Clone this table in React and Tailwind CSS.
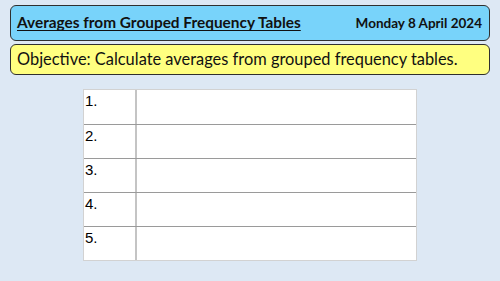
const rows = ['1.', '2.', '3.', '4.', '5.']

export default function App() {
  return (
    <div className="w-[500px] h-[281px] bg-[#dde8f4] flex flex-col px-[10px] pt-[5px] font-['Lato',sans-serif] text-[#111]">
      <div className="h-[36px] rounded-[6px] border-[1.5px] border-[#2f2f2f] bg-[#78d3fa] flex items-center justify-between px-[6px]">
        <span className="text-[15.4px] font-bold underline underline-offset-[2px]">Averages from Grouped Frequency Tables</span>
        <span className="text-[13.5px] font-bold mr-[1px]">Monday 8 April 2024</span>
      </div>
      <div className="mt-[3px] h-[31px] rounded-[6px] border-[1.5px] border-[#2f2f2f] bg-[#ffff80] flex items-center px-[6px]">
        <span className="text-[16.4px]">Objective: Calculate averages from grouped frequency tables.</span>
      </div>
      <div className="mt-[14px] ml-[73px] w-[334px] bg-white border border-[#d2d2d2] font-['Liberation_Sans',Arial,sans-serif] text-black">
        {rows.map((r, i) => (
          <div key={r} className={`flex h-[34px] ${i > 0 ? 'border-t border-[#9a9a9a]' : ''}`}>
            <div className="w-[53px] border-r-2 border-[#c4c4c4] pl-[1px] text-[15px] leading-[16px] pt-[3px]">{r}</div>
            <div className="flex-1" />
          </div>
        ))}
      </div>
    </div>
  )
}
